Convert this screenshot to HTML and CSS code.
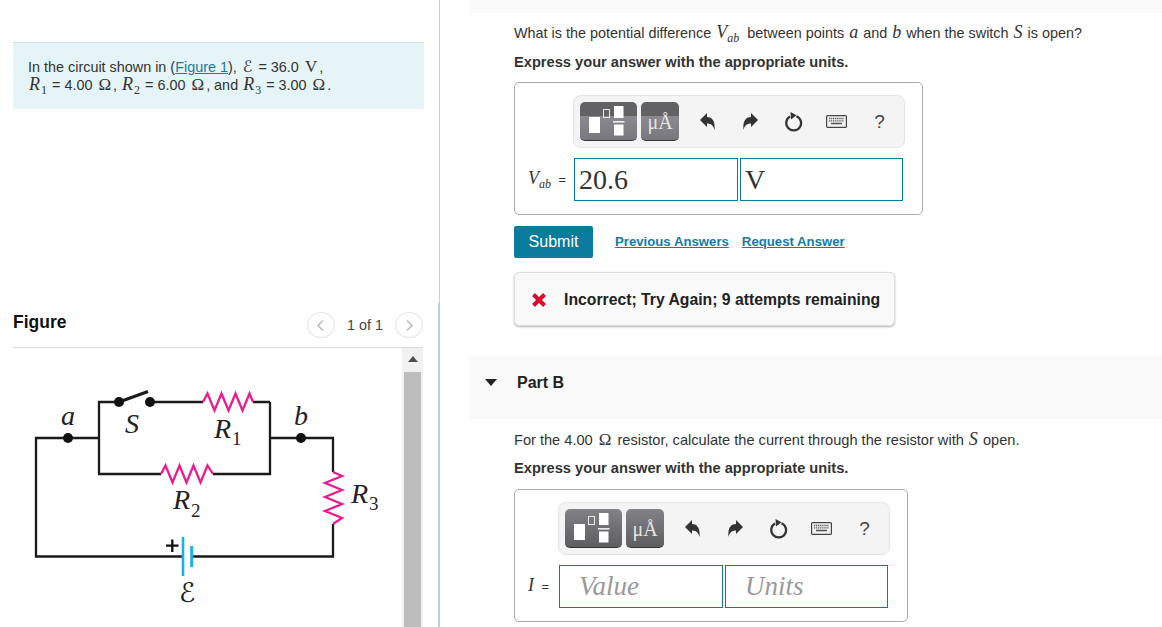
FILE: index.html
```html
<!DOCTYPE html>
<html lang="en">
<head>
<meta charset="UTF-8" />
<meta name="viewport" content="width=device-width, initial-scale=1" />
<title>Circuit problem</title>
<link rel="stylesheet" href="styles.css">
</head>
<body>

<svg class="defs" width="0" height="0">
  <symbol id="i-undo" viewBox="0 0 15 17"><path d="M0 7 L7 0 V4 C12 4 15.5 8 14.5 17 C13.5 12.5 11 10.5 7 10.5 V14 Z" fill="#333"/></symbol>
  <symbol id="i-redo" viewBox="0 0 15 17"><path d="M15 7 L8 0 V4 C3 4 -0.5 8 0.5 17 C1.5 12.5 4 10.5 8 10.5 V14 Z" fill="#333"/></symbol>
  <symbol id="i-reload" viewBox="0 0 18 20">
    <path d="M11.5 4.2 A7.4 7.4 0 1 1 5 4.6" fill="none" stroke="#333" stroke-width="2.3"/>
    <path d="M5.5 0 L11.5 3.2 L6 7.6 Z" fill="#333"/>
  </symbol>
  <symbol id="i-keys" viewBox="0 0 21 13">
    <rect x="0.6" y="0.6" width="19.8" height="11.8" rx="1" fill="#f4f4f4" stroke="#444" stroke-width="1.2"/>
    <path d="M3 3.5H18M3 5.8H18" stroke="#555" stroke-width="1.3" stroke-dasharray="1.2 .7"/>
    <path d="M5 8.5H16" stroke="#555" stroke-width="1.6"/>
  </symbol>
  <symbol id="i-tmpl" viewBox="0 0 57 39">
    <rect x="9" y="15" width="11" height="16" fill="#fff"/>
    <rect x="23.5" y="7.5" width="6" height="8" fill="none" stroke="#e8e8e8"/>
    <rect x="34" y="4" width="9.5" height="12" fill="#fff"/>
    <rect x="33" y="19" width="11.5" height="1.6" fill="#eee"/>
    <rect x="34" y="22.5" width="9.5" height="11" fill="#fff"/>
  </symbol>
</svg>

<div class="page">

  <div class="left">
    <div class="intro">
      In the circuit shown in (<a href="#">Figure 1</a>), <span class="script">ℰ</span> = 36.0 <span class="unit">V</span>,<br>
      <i class="var">R</i><sub>1</sub> = 4.00 <span class="unit">Ω</span>, <i class="var">R</i><sub>2</sub> = 6.00 <span class="unit">Ω</span>, and <i class="var">R</i><sub>3</sub> = 3.00 <span class="unit">Ω</span>.
    </div>

    <div class="figure-head">
      <h2>Figure</h2>
      <div class="pager">
        <span class="pager-btn">
          <svg width="9" height="13" viewBox="0 0 9 13"><path d="M7 1.5 L2 6.5 L7 11.5" fill="none" stroke="#bbb" stroke-width="1.6"/></svg>
        </span>
        <span class="pager-text">1 of 1</span>
        <span class="pager-btn">
          <svg width="9" height="13" viewBox="0 0 9 13"><path d="M2 1.5 L7 6.5 L2 11.5" fill="none" stroke="#bbb" stroke-width="1.6"/></svg>
        </span>
      </div>
    </div>

    <div class="figure-pane">
      <svg class="circuit" width="389" height="279" viewBox="13 348 389 279">
        <g fill="none" stroke="#1a1a1a" stroke-width="2.3">
          <path d="M99 438 H36 V556.5 H183 M191 556.5 H333 V524 M333 472 V438 H270 M270 402 V474 H213 M161 474 H99 V402 H119 M150 402 H203 M253 402 H270"/>
          <path d="M119 402 L148 391.5" stroke-width="3"/>
        </g>
        <g fill="#111">
          <circle cx="68" cy="438" r="5"/>
          <circle cx="301" cy="438" r="5"/>
          <circle cx="119" cy="402" r="5"/>
          <circle cx="150" cy="402" r="5"/>
        </g>
        <g fill="none" stroke="#ec1c8e" stroke-width="2.3">
          <path d="M203 402 L207.5 393.5 L214.5 410.5 L221.5 393.5 L228.5 410.5 L235.5 393.5 L242.5 410.5 L249.5 393.5 L253 402"/>
          <path d="M161 474 L165.5 465.5 L172.5 482.5 L179.5 465.5 L186.5 482.5 L193.5 465.5 L200.5 482.5 L207.5 465.5 L213 474"/>
          <path d="M333 472 L342 476 L325 483 L342 490 L325 497 L342 504 L325 511 L342 518 L333 524"/>
        </g>
        <g stroke="#1cb0e6" stroke-width="2.6">
          <path d="M183 537 V576"/>
          <path d="M191.7 546 V567" stroke-width="3"/>
        </g>
        <path d="M166 545.7 H178.5 M172.3 539.5 V552" stroke="#111" stroke-width="2.3"/>
        <g class="labels">
          <text x="61" y="425">a</text>
          <text x="125" y="433">S</text>
          <text x="214" y="438">R<tspan class="idx" dx="1" dy="7">1</tspan></text>
          <text x="173" y="509">R<tspan class="idx" dx="1" dy="8">2</tspan></text>
          <text x="351" y="503">R<tspan class="idx" dx="1" dy="7">3</tspan></text>
          <text x="294" y="425">b</text>
          <text x="179" y="602" class="script-label">ℰ</text>
        </g>
      </svg>
      <div class="scrollbar">
        <span class="scroll-up"></span>
        <div class="scroll-thumb"></div>
      </div>
    </div>
  </div>

  <div class="right">
    <div class="strip-top"></div>

    <div class="question">
      <p class="q-text">What is the potential difference <i class="var">V</i><sub class="sub-i">ab</sub> between points <i class="var">a</i> and <i class="var">b</i> when the switch <i class="var">S</i> is open?</p>
      <p class="q-hint">Express your answer with the appropriate units.</p>

      <div class="answer answer-a">
        <div class="label-cell"></div>
        <div class="toolbar">
          <span class="tbtn tbtn-split tbtn-tmpl"><svg width="57" height="39"><use href="#i-tmpl"/></svg></span>
          <span class="tbtn tbtn-split tbtn-units">μÅ</span>
          <span class="tool tool-first"><svg width="15" height="17"><use href="#i-undo"/></svg></span>
          <span class="tool"><svg width="15" height="17"><use href="#i-redo"/></svg></span>
          <span class="tool"><svg width="18" height="20"><use href="#i-reload"/></svg></span>
          <span class="tool"><svg width="21" height="13"><use href="#i-keys"/></svg></span>
          <span class="tool tool-help">?</span>
        </div>
        <div class="label-cell"><i class="var">V</i><sub class="sub-i">ab</sub> =</div>
        <div class="fields">
          <div class="field">20.6</div>
          <div class="field">V</div>
        </div>
      </div>

      <div class="actions">
        <a class="submit" href="#">Submit</a>
        <a class="action-link" href="#">Previous Answers</a>
        <a class="action-link" href="#">Request Answer</a>
      </div>

      <div class="feedback">
        <svg width="16" height="16" viewBox="0 0 16 16"><path d="M2.5 2.5 L13.5 13.5 M13.5 2.5 L2.5 13.5" stroke="#dc0a2c" stroke-width="4"/></svg>
        <span>Incorrect; Try Again; 9 attempts remaining</span>
      </div>
    </div>

    <div class="part-head">
      <span class="part-arrow"></span>
      <h3>Part B</h3>
    </div>

    <div class="question">
      <p class="q-text q-text-b">For the 4.00 <span class="unit">Ω</span> resistor, calculate the current through the resistor with <i class="var">S</i> open.</p>
      <p class="q-hint">Express your answer with the appropriate units.</p>

      <div class="answer answer-b">
        <div class="label-cell"></div>
        <div class="toolbar">
          <span class="tbtn tbtn-tmpl"><svg width="57" height="39"><use href="#i-tmpl"/></svg></span>
          <span class="tbtn tbtn-units">μÅ</span>
          <span class="tool tool-first"><svg width="15" height="17"><use href="#i-undo"/></svg></span>
          <span class="tool"><svg width="15" height="17"><use href="#i-redo"/></svg></span>
          <span class="tool"><svg width="18" height="20"><use href="#i-reload"/></svg></span>
          <span class="tool"><svg width="21" height="13"><use href="#i-keys"/></svg></span>
          <span class="tool tool-help">?</span>
        </div>
        <div class="label-cell"><i class="var">I</i> =</div>
        <div class="fields">
          <div class="field field-empty">Value</div>
          <div class="field field-empty">Units</div>
        </div>
      </div>
    </div>
  </div>

</div>

</body>
</html>
```

FILE: styles.css
```css
html, body {
  height: 100%;
}

body {
  margin: 0;
  overflow: hidden;
  background: white;
  font-family: "Liberation Sans", Arial, sans-serif;
  font-size: 14.4px;
  color: #333;
}

a {
  color: #1a7a9c;
}

.defs {
  position: absolute;
}

.page {
  display: flex;
  height: 627px;
  overflow: hidden;
}

/* Left column, the divider changes at the figure */
.left {
  box-sizing: border-box;
  width: 440px;
  flex-shrink: 0;
  padding: 42px 16px 0 13px;
  background:
    linear-gradient(#c8ced6, #c8ced6) right top / 1px 303px no-repeat,
    linear-gradient(#b9cde2, #b9cde2) right bottom / 2px 324px no-repeat;
}

.intro {
  height: 67px;
  padding: 15px 15px 0;
  box-sizing: border-box;
  border-top: 1px solid #d8dfe2;
  background: #e5f5f7;
  line-height: 18px;
}

.var, .unit, .script {
  font-family: "Liberation Serif", "DejaVu Serif", serif;
  font-size: 18px;
  line-height: 0;
}

.var {
  padding: 0 1px;
}

.unit {
  margin: 0 2px;
  font-size: 17px;
}

.script {
  margin: 0 2px;
  font-family: "DejaVu Sans", serif;
  font-size: 16px;
}

sub {
  margin-right: 1px;
  font-size: 12px;
  line-height: 0;
  font-family: "Liberation Serif", serif;
}

.sub-i {
  margin: 0 4px 0 -1px;
  font-style: italic;
}

.figure-head {
  display: flex;
  justify-content: space-between;
  align-items: flex-start;
  height: 36px;
  margin: 202px 1px 0 0;
  border-bottom: 1px solid #dcdcdc;
}

.figure-head h2 {
  margin: 0;
  font-size: 17.5px;
  line-height: 22px;
  color: #111;
}

.pager {
  display: flex;
  align-items: center;
  gap: 12px;
  margin-top: 1px;
}

.pager-btn {
  box-sizing: border-box;
  display: flex;
  align-items: center;
  justify-content: center;
  width: 28px;
  height: 26px;
  border: 1px solid #e5e5e5;
  border-radius: 50%;
}

.pager-text {
  color: #444;
}

.figure-pane {
  display: flex;
  margin-right: 1px;
}

.circuit {
  display: block;
}

.labels text {
  font-family: "Liberation Serif", serif;
  font-style: italic;
  font-size: 28px;
  fill: #222;
}

.labels .idx {
  font-style: normal;
  font-size: 19px;
}

.labels .script-label {
  font-family: "DejaVu Sans", serif;
  font-size: 27px;
}

.scrollbar {
  width: 21px;
  height: 279px;
  padding: 0 2px;
  box-sizing: border-box;
  background: #f1f1f1;
}

.scroll-up {
  display: block;
  width: 0;
  margin: 8px auto 10px;
  border-left: 5px solid transparent;
  border-right: 5px solid transparent;
  border-bottom: 6px solid #505050;
}

.scroll-thumb {
  height: 260px;
  background: #bcbcbc;
}

/* Right column */
.right {
  flex: 1;
  padding-left: 29px;
}

.strip-top {
  height: 13px;
  background: #f9f9f9;
}

.question {
  padding-left: 45px;
}

.q-text {
  margin: 10px 0 0;
  line-height: 20px;
}

.q-text-b {
  margin-top: 11px;
  font-size: 14.6px;
}

.q-hint {
  margin: 9px 0 0;
  font-size: 14.65px;
  line-height: 20px;
  font-weight: bold;
}

.q-text-b + .q-hint {
  margin-top: 8px;
}

.answer {
  display: grid;
  align-content: start;
  box-sizing: border-box;
  row-gap: 10px;
  height: 133px;
  margin-top: 10px;
  padding: 12px 0 0 13px;
  border: 1px solid #aaa;
  border-radius: 5px;
}

.answer-a {
  width: 409px;
  grid-template-columns: 46px auto;
}

.answer-b {
  width: 394px;
  margin-top: 11px;
  grid-template-columns: 31px auto;
}

.label-cell {
  margin-left: -1px;
  font-size: 13px;
  line-height: 43px;
  white-space: nowrap;
}

.answer-b .var {
  padding-right: 4px;
}

.toolbar {
  box-sizing: border-box;
  display: flex;
  align-items: center;
  width: 332px;
  height: 53px;
  margin-left: -1px;
  padding-left: 6px;
  border: 1px solid #e3e3e3;
  border-radius: 8px;
  background: #f4f4f4;
}

.tbtn {
  box-sizing: border-box;
  display: flex;
  align-items: center;
  justify-content: center;
  height: 39px;
  border-radius: 5px;
  border-bottom: 1px solid #333;
  background: linear-gradient(#828287, #5e5e60);
  color: #e6e6e6;
  font-family: "Liberation Serif", serif;
  font-size: 20px;
}

.tbtn-split {
  background: linear-gradient(#626264 0, #626264 38%, #8a8a90 38%, #77777c 100%);
}

.tbtn-tmpl {
  width: 57px;
  margin-right: 4px;
}

.tbtn-units {
  width: 38px;
  margin-right: 7px;
  padding-top: 3px;
}

.tool {
  display: flex;
  align-items: center;
  justify-content: center;
  width: 43px;
}

.tool-help {
  font-size: 19px;
  color: #444;
}

.fields {
  display: flex;
  gap: 2px;
}

.field {
  box-sizing: border-box;
  width: 164px;
  height: 43px;
  padding-left: 4px;
  border: 1px solid #0a7b9c;
  font-family: "Liberation Serif", serif;
  font-size: 28px;
  line-height: 41px;
}

.field:last-child {
  width: 163px;
}

.field-empty {
  padding-left: 19px;
  font-style: italic;
  font-size: 27px;
  color: #999;
}

.actions {
  display: flex;
  align-items: center;
  margin-top: 11px;
}

.submit {
  width: 79px;
  height: 32px;
  margin-right: 22px;
  border-radius: 2px;
  background: #0a7b9c;
  color: white;
  font-size: 16px;
  line-height: 32px;
  text-align: center;
  text-decoration: none;
}

.action-link {
  margin: 0 13px 2px 0;
  font-size: 13.2px;
  font-weight: bold;
}

.feedback {
  box-sizing: border-box;
  display: flex;
  align-items: center;
  gap: 17px;
  width: 381px;
  height: 54px;
  margin-top: 14px;
  padding: 2px 0 0 16px;
  border: 1px solid #ddd;
  border-radius: 5px;
  background: #f9f9f9;
  box-shadow: 0 1px 2px rgba(0,0,0,0.3);
  font-size: 15.75px;
  font-weight: bold;
  color: #222;
}

.part-head {
  display: flex;
  align-items: flex-start;
  height: 63px;
  margin-top: 30px;
  background: #f9f9f9;
}

.part-arrow {
  width: 0;
  margin: 23px 0 0 16px;
  border-left: 6px solid transparent;
  border-right: 6px solid transparent;
  border-top: 7px solid #222;
}

.part-head h3 {
  margin: 16px 0 0 20px;
  font-size: 16px;
  font-weight: bold;
  line-height: 22px;
  color: #222;
}
```
